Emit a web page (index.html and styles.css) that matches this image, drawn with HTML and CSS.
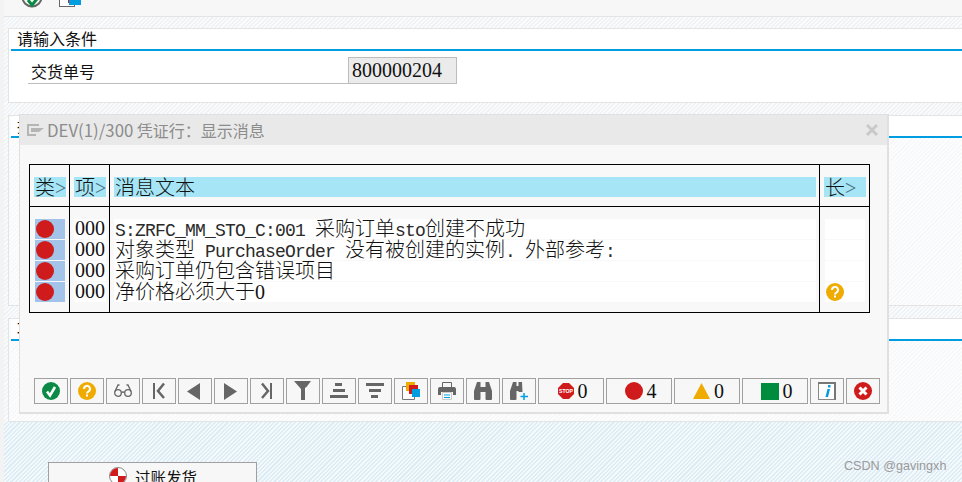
FILE: index.html
```html
<!DOCTYPE html>
<html lang="zh">
<head>
<meta charset="utf-8">
<title>DEV(1)/300 凭证行：显示消息</title>
<link rel="stylesheet" href="styles.css">
</head>
<body>
<div class="shell">
  <div class="gutter"></div>
  <main class="main">
    <div class="toolbar">
      <svg class="tool-a" width="22" height="8" viewBox="0 12 22 8"><circle cx="11" cy="9" r="9.500" fill="none" stroke="#666" stroke-width="2"/><path d="M7 12l4 5 9-11" fill="none" stroke="#0a8a45" stroke-width="3"/></svg>
      <svg class="tool-b" width="22" height="7" viewBox="0 11 22 7"><rect x="0.500" y="0" width="15" height="17.500" fill="#fff" stroke="#666"/><rect x="9" y="8" width="5" height="6" fill="#cf1b1b"/><rect x="10" y="11" width="12" height="5" fill="#009de0"/></svg>
    </div>
    <div class="content">
      <section class="panel panel-white">
        <h2 class="panel-title">请输入条件</h2>
        <div class="field">
          <label class="field-label">交货单号</label>
          <div class="field-value">800000204</div>
        </div>
      </section>
      <section class="panel panel-tall">
        <h2 class="panel-title">抬头</h2>
      </section>
      <section class="panel panel-short">
        <h2 class="panel-title">项目</h2>
      </section>
    </div>
    <div class="footer">
      <button class="post-btn">
        <svg width="18" height="18" viewBox="0 0 18 18"><circle cx="9" cy="9" r="8.500" fill="#fff" stroke="#888"/><path d="M9 9V1a8 8 0 0 0-8 8zM9 9v8a8 8 0 0 0 8-8z" fill="#cf1b1b"/></svg>
        <span>过账发货</span>
      </button>
    </div>
  </main>
</div>

<div class="dialog">
  <header class="dialog-head">
    <svg class="dialog-icon" width="18" height="14" viewBox="0 0 18 14"><path d="M1 1h12v2H3v8h7v2H1z" fill="#b5b5b5"/><path d="M5 5h13l-5 4H5z" fill="#b5b5b5"/></svg>
    <span class="dialog-title"><span class="dialog-sys">DEV(1)/300</span> 凭证行：显示消息</span>
    <svg class="dialog-close" width="12" height="12" viewBox="0 0 12 12"><path d="M1 1l10 10M11 1L1 11" stroke="#c9c9c9" stroke-width="3"/></svg>
  </header>
  <div class="dialog-body">
    <table class="msg">
      <thead>
        <tr>
          <th class="c1"><div class="hfill"><span class="cj">类</span><span class="gt">&gt;</span></div></th>
          <th class="c2"><div class="hfill"><span class="cj">项</span><span class="gt">&gt;</span></div></th>
          <th class="c3"><div class="hfill"><span class="cj">消息文本</span></div></th>
          <th class="c4"><div class="hfill"><span class="cj">长</span><span class="gt">&gt;</span></div></th>
        </tr>
      </thead>
      <tbody>
        <tr>
          <td class="c1"><div class="line type"><svg width="18" height="18" viewBox="0 0 18 18"><circle cx="9" cy="9" r="9" fill="#cf1b1b"/></svg></div></td>
          <td class="c2"><div class="line num">000</div></td>
          <td class="c3"><div class="line">S:ZRFC_MM_STO_C:001 <span class="cj">采购订单</span>sto<span class="cj">创建不成功</span></div></td>
          <td class="c4"><div class="line"></div></td>
        </tr>
        <tr>
          <td class="c1"><div class="line type"><svg width="18" height="18" viewBox="0 0 18 18"><circle cx="9" cy="9" r="9" fill="#cf1b1b"/></svg></div></td>
          <td class="c2"><div class="line num">000</div></td>
          <td class="c3"><div class="line"><span class="cj">对象类型</span> PurchaseOrder <span class="cj">没有被创建的实例</span>. <span class="cj">外部参考</span>:</div></td>
          <td class="c4"><div class="line"></div></td>
        </tr>
        <tr>
          <td class="c1"><div class="line type"><svg width="18" height="18" viewBox="0 0 18 18"><circle cx="9" cy="9" r="9" fill="#cf1b1b"/></svg></div></td>
          <td class="c2"><div class="line num">000</div></td>
          <td class="c3"><div class="line"><span class="cj">采购订单仍包含错误项目</span></div></td>
          <td class="c4"><div class="line"></div></td>
        </tr>
        <tr>
          <td class="c1"><div class="line type"><svg width="18" height="18" viewBox="0 0 18 18"><circle cx="9" cy="9" r="9" fill="#cf1b1b"/></svg></div></td>
          <td class="c2"><div class="line num">000</div></td>
          <td class="c3"><div class="line"><span class="cj">净价格必须大于</span><span class="num">0</span></div></td>
          <td class="c4"><div class="line long"><svg width="18" height="18" viewBox="0 0 18 18"><circle cx="9" cy="9" r="9" fill="#f0ab00"/><path d="M6 7a3 3 0 1 1 4.600 2.400C9.500 10.100 9 10.500 9 11.500" fill="none" stroke="#fff" stroke-width="2"/><rect x="8" y="12.500" width="2" height="2" fill="#fff"/></svg></div></td>
        </tr>
      </tbody>
    </table>
    <div class="actions">
      <button class="act"><svg width="18" height="18" viewBox="0 0 18 18"><circle cx="9" cy="9" r="9" fill="#0a8a45"/><path d="M5 9.500l3 4 5-8.500" fill="none" stroke="#fff" stroke-width="2.600"/></svg></button>
      <button class="act"><svg width="18" height="18" viewBox="0 0 18 18"><circle cx="9" cy="9" r="9" fill="#f0ab00"/><path d="M6 7a3 3 0 1 1 4.600 2.400C9.500 10.100 9 10.500 9 11.500" fill="none" stroke="#fff" stroke-width="2"/><rect x="8" y="12.500" width="2" height="2" fill="#fff"/></svg></button>
      <button class="act"><svg width="18" height="18" viewBox="0 0 18 18" fill="none" stroke="#666" stroke-width="1.300"><circle cx="4" cy="11" r="3.300"/><circle cx="14" cy="11" r="3.300"/><path d="M7.300 10.500q1.700-1 3.400 0M1 9.500L4 3h1.500M17 9.500L14 3h-1.500"/></svg></button>
      <button class="act"><svg width="18" height="18" viewBox="0 0 18 18"><rect x="3" y="1" width="2" height="16" fill="#666"/><path d="M14 1.500L8 9l6 7" fill="none" stroke="#666" stroke-width="2.500"/></svg></button>
      <button class="act"><svg width="18" height="18" viewBox="0 0 18 18"><path d="M14 1v17L1 9.500z" fill="#666"/></svg></button>
      <button class="act"><svg width="18" height="18" viewBox="0 0 18 18"><path d="M2 1v17l13-8.500z" fill="#666"/></svg></button>
      <button class="act"><svg width="18" height="18" viewBox="0 0 18 18"><path d="M4 1.500L10 9l-6 7" fill="none" stroke="#666" stroke-width="2.500"/><rect x="12" y="1" width="2" height="16" fill="#666"/></svg></button>
      <button class="act"><svg width="18" height="20" viewBox="0 0 18 20"><path d="M0 0h17l-6 8v11H7V8z" fill="#666"/><path d="M12 6q2 2 0 4q-2-2 0-4z" fill="#fff"/></svg></button>
      <button class="act"><svg width="18" height="18" viewBox="0 0 18 18" fill="#666"><rect x="5" y="1" width="7" height="3"/><rect x="3" y="7" width="12" height="3"/><rect x="0" y="13" width="18" height="3"/></svg></button>
      <button class="act"><svg width="18" height="18" viewBox="0 0 18 18" fill="#666"><rect x="0" y="1" width="18" height="3"/><rect x="3" y="7" width="12" height="3"/><rect x="5" y="13" width="7" height="3"/></svg></button>
      <button class="act"><svg width="18" height="18" viewBox="0 0 18 18"><path d="M0.500 4.500h12v13h-12z" fill="#fff" stroke="#777"/><rect x="4" y="0" width="9" height="9" fill="#f0ab00"/><rect x="7" y="3" width="9" height="9" fill="#cf1b1b"/><rect x="10" y="7" width="8" height="8" fill="#009de0"/></svg></button>
      <button class="act"><svg width="18" height="18" viewBox="0 0 18 18"><path d="M4.500 6V0.500h9V6" fill="none" stroke="#666"/><path d="M2 5h14a2 2 0 0 1 2 2v6h-3v-3H3v3H0V7a2 2 0 0 1 2-2z" fill="#666"/><path d="M4.500 10.500h9v7h-9z" fill="#fff" stroke="#ccc"/><path d="M6 13h6M6 15.500h6" stroke="#009de0"/></svg></button>
      <button class="act"><svg width="18" height="18" viewBox="0 0 18 18" fill="#666"><path d="M3 0h3.500v17a1 1 0 0 1-1 1H1a1 1 0 0 1-1-1V9zM15 0h-3.500v17a1 1 0 0 0 1 1H17a1 1 0 0 0 1-1V9z"/><rect x="6" y="5" width="6" height="5"/></svg></button>
      <button class="act"><svg width="18" height="18" viewBox="0 0 18 18"><path d="M3 0h3.500v17a1 1 0 0 1-1 1H1a1 1 0 0 1-1-1V9zM12 0H8.500v10h4z" fill="#666"/><rect x="5" y="4" width="5" height="5" fill="#666"/><path d="M14 11v7M10.500 14.500H18" stroke="#009de0" stroke-width="1.500"/></svg></button>
      <button class="act stat"><svg width="16" height="16" viewBox="0 0 16 16"><path d="M5 0h6l5 5v6l-5 5H5l-5-5V5z" fill="#cf1b1b"/><text class="stop" x="8" y="10" text-anchor="middle">STOP</text></svg><span>0</span></button>
      <button class="act stat"><svg width="18" height="18" viewBox="0 0 18 18"><circle cx="9" cy="9" r="9" fill="#cf1b1b"/></svg><span>4</span></button>
      <button class="act stat"><svg width="17" height="16" viewBox="0 0 17 16"><path d="M8.500 0L17 16H0z" fill="#f0ab00"/></svg><span>0</span></button>
      <button class="act stat"><svg width="18" height="17" viewBox="0 0 18 17"><rect width="18" height="17" fill="#008c3f"/></svg><span>0</span></button>
      <button class="act"><svg width="18" height="18" viewBox="0 0 18 18"><rect x="0.500" y="0.500" width="17" height="17" fill="#fff" stroke="#888"/><path d="M0 0h18v2H0zM16 0h2v18h-2z" fill="#777"/><path d="M10 3h2.500v2.500H10zM9.500 7h2.500l-2 8H7.500z" fill="#009de0"/></svg></button>
      <button class="act"><svg width="18" height="18" viewBox="0 0 18 18"><circle cx="9" cy="9" r="9" fill="#cf1b1b"/><path d="M5.500 5.500l7 7M12.500 5.500l-7 7" stroke="#fff" stroke-width="3"/></svg></button>
    </div>
  </div>
</div>

<div class="watermark">CSDN @gavingxh</div>
</body>
</html>
```

FILE: styles.css
```css
* { box-sizing: border-box; }
html, body { margin: 0; height: 482px; overflow: hidden; }
body { font-family: "Noto Sans CJK SC", "Noto Sans", sans-serif; position: relative; background: #fff; }
button { font: inherit; padding: 0; margin: 0; }

.shell { display: flex; height: 482px; overflow: hidden; }
.gutter { width: 4px; flex: none; background: #f3f3f3; }
.main {
  flex: 1; min-width: 0;
  background: repeating-linear-gradient(135deg, #deedf5 0 1.5px, #f4f9fc 1.5px 3px);
}

.toolbar {
  height: 17px; background: #f7f7f7; border-bottom: 1px solid #e4e4e4;
  display: flex; align-items: flex-start; padding-left: 17px;
}
.tool-a { margin-right: 16px; }

.content {
  padding: 11px 0 0 4px; height: 405px;
  background: repeating-linear-gradient(135deg, #eff3f6 0 1.5px, #f9fbfc 1.5px 3px);
  display: flex; flex-direction: column; gap: 12px;
}
.panel { border: 1px solid #e4e4e4; border-right: none; }
.panel-white { height: 75px; background: #fff; }
.panel-tall { height: 191px; background: repeating-linear-gradient(135deg, #f6f8f9 0 1.5px, #fdfdfe 1.5px 3px); }
.panel-short { height: 104px; background: repeating-linear-gradient(135deg, #f6f8f9 0 1.5px, #fdfdfe 1.5px 3px); }
.panel-title {
  margin: 0 0 0 2px; height: 22px; padding-left: 6px;
  font-size: 16px; font-weight: 400; line-height: 19px; color: #111;
  background: #fff; border-bottom: 2px solid #009de0;
}

.field { display: flex; padding: 6px 0 0 19px; }
.field-label {
  width: 320px; height: 27px; padding: 3px 0 0 3px;
  font-size: 16px; line-height: 22px; color: #111;
  border-bottom: 1px solid #bdbdbd;
}
.field-value {
  width: 109px; height: 27px; padding-left: 3px;
  background: #ebebeb; border: 1px solid #bdbdbd;
  font: 20px/25px "Liberation Serif", serif; color: #111;
}

.footer { padding: 40px 0 0 44px; }
.post-btn {
  width: 209px; height: 40px; background: #f7f7f7; border: 1px solid #a0a0a0;
  display: flex; align-items: flex-start; padding: 4px 0 0 60px; gap: 8px;
  font-size: 15.500px; line-height: 20px; color: #111;
}

.dialog {
  position: absolute; left: 19px; top: 114px; width: 870px; height: 300px;
  background: #f8f8f8; border: 1px solid #e0e0e0; border-width: 1px 2px 2px 1px;
}
.dialog-head {
  height: 30px; background: #e9e9e9;
  display: flex; align-items: center; padding: 0 9px 0 6px;
}
.dialog-icon { margin-right: 3px; }
.dialog-title { flex: 1; font-size: 16px; color: #8c8c8c; }
.dialog-sys { font-size: 16.800px; }
.dialog-body { padding: 19px 0 0 9px; }

.msg {
  border-collapse: collapse; table-layout: fixed; width: 841px;
  background: transparent; border: 1px solid #000;
  font: 18px/18px "Liberation Mono", monospace; letter-spacing: -0.800px; color: #2a2a2a;
}
.msg th, .msg td { padding: 0; border-right: 1px solid #000; font-weight: 400; text-align: left; vertical-align: top; }
.msg th.c1 { width: 40px; }
.msg th.c2 { width: 40px; }
.msg th.c3 { width: 710px; }
.msg th { height: 42px; border-bottom: 1px solid #000; padding-top: 12px; }
.cj { font-family: "Noto Sans CJK SC", sans-serif; font-size: 20px; font-weight: 300; letter-spacing: 0; color: #111; }
.num { font-family: "Liberation Serif", serif; font-size: 20px; letter-spacing: 0; color: #111; }
.gt { font-family: "Liberation Serif", serif; font-size: 20px; letter-spacing: -1px; color: #4a6a80; }
.hfill { height: 20px; margin: 0 3px 0 4px; padding-left: 1px; background: #a5e5f5; white-space: nowrap; line-height: 19px; }

.msg td { padding-bottom: 1px; }
.msg tbody tr:first-child td { padding-top: 12px; }
.msg tbody tr:last-child td { padding-bottom: 10px; }
.line { display: block; height: 20px; background: #fff; white-space: nowrap; }
.line svg { display: block; }
.c1 .line, .c4 .line { margin: 0 4px 0 5px; }
.c2 .line, .c3 .line { margin: 0 3px 0 4px; padding-left: 1px; }
.line.type { background: #a3c3e8; padding: 1px 0 0 1px; }
.line.long { padding: 1px 0 0 1px; }

.actions { display: flex; gap: 2px; padding: 65px 0 0 5px; }
.act {
  width: 34px; height: 26px; flex: none;
  background: #f7f7f7; border: 1px solid #a0a0a0;
  display: flex; align-items: center; justify-content: center;
}
.act.stat { width: 66px; gap: 4px; padding-left: 3px; font: 20px/20px "Liberation Serif", serif; color: #111; }
.stop { font: 700 5.200px "Liberation Sans", sans-serif; fill: #fff; }

.watermark {
  position: absolute; left: 844px; top: 458px;
  font: 12.600px/16px "Liberation Sans", sans-serif; color: #9a9a9a;
}
```
